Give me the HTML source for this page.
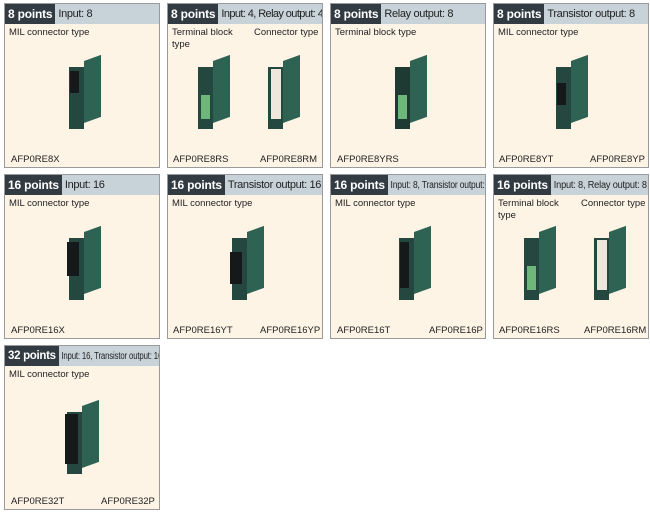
<!DOCTYPE html><html><head><style>
body{margin:0;width:650px;height:514px;background:#fff;font-family:"Liberation Sans",sans-serif;position:relative;overflow:hidden}
.c{position:absolute;width:156px;height:165px;border:1px solid #9a9a9a;background:#fdf4e6;box-sizing:border-box}
.h{height:20px;background:#c8d2d9;display:flex;align-items:center;white-space:nowrap;overflow:hidden}
.h b{background:#323a42;color:#fff;font-size:12px;height:20px;line-height:20px;padding:0 3px 0 3px;letter-spacing:-0.2px}
.h span{font-size:11px;color:#222;padding-left:3px;letter-spacing:-0.35px}
.h span.s{font-size:10px;letter-spacing:-0.2px;display:inline-block;transform:scaleX(0.92);transform-origin:0 50%}
.t{position:absolute;font-size:9.5px;color:#222;top:23px;line-height:12px}
.m{position:absolute;font-size:9.5px;color:#222;top:150px}
.mod{position:absolute;width:32px;height:68px}
.mod .f{position:absolute;left:0;top:6px;width:15px;height:62px;background:#24483f}
.mod .s{position:absolute;left:15px;top:0;width:17px;height:62px;background:#2e6354;transform:skewY(-20deg);transform-origin:0 100%}
.mod .k{position:absolute;left:1px;width:9px;background:#15191a}
.mod .g{position:absolute;left:3px;top:34px;width:9px;height:24px;background:#6fb67a}
.mod .w{position:absolute;left:3px;top:8px;width:10px;height:50px;background:#eee8dc}
</style></head><body>

<div class="c" style="left:4px;top:3px"><div class="h"><b>8 points</b><span>Input: 8</span></div>
<div class="t" style="left:4px">MIL connector type</div>
<div class="mod" style="left:64px;top:57px"><div class="s"></div><div class="f"></div><div class="k" style="top:10px;height:22px"></div></div>
<div class="m" style="left:6px">AFP0RE8X</div></div>

<div class="c" style="left:167px;top:3px"><div class="h"><b>8 points</b><span style="letter-spacing:-0.6px">Input: 4, Relay output: 4</span></div>
<div class="t" style="left:4px">Terminal block<br>type</div><div class="t" style="left:86px">Connector type</div>
<div class="mod" style="left:30px;top:57px"><div class="s"></div><div class="f"></div><div class="g"></div></div>
<div class="mod" style="left:100px;top:57px"><div class="s"></div><div class="f"></div><div class="w"></div></div>
<div class="m" style="left:5px">AFP0RE8RS</div><div class="m" style="left:92px">AFP0RE8RM</div></div>

<div class="c" style="left:330px;top:3px"><div class="h"><b>8 points</b><span>Relay output: 8</span></div>
<div class="t" style="left:4px">Terminal block type</div>
<div class="mod" style="left:64px;top:57px"><div class="s"></div><div class="f" style="background:#1f3a33"></div><div class="g"></div></div>
<div class="m" style="left:6px">AFP0RE8YRS</div></div>

<div class="c" style="left:493px;top:3px"><div class="h"><b>8 points</b><span>Transistor output: 8</span></div>
<div class="t" style="left:4px">MIL connector type</div>
<div class="mod" style="left:62px;top:57px"><div class="s"></div><div class="f"></div><div class="k" style="top:22px;height:22px"></div></div>
<div class="m" style="left:5px">AFP0RE8YT</div><div class="m" style="left:96px">AFP0RE8YP</div></div>

<div class="c" style="left:4px;top:174px"><div class="h"><b>16 points</b><span>Input: 16</span></div>
<div class="t" style="left:4px">MIL connector type</div>
<div class="mod" style="left:64px;top:57px"><div class="s"></div><div class="f"></div><div class="k" style="top:10px;height:34px;width:12px;left:-2px"></div></div>
<div class="m" style="left:6px">AFP0RE16X</div></div>

<div class="c" style="left:167px;top:174px"><div class="h"><b>16 points</b><span>Transistor output: 16</span></div>
<div class="t" style="left:4px">MIL connector type</div>
<div class="mod" style="left:64px;top:57px"><div class="s"></div><div class="f"></div><div class="k" style="top:20px;height:32px;width:12px;left:-2px"></div></div>
<div class="m" style="left:5px">AFP0RE16YT</div><div class="m" style="left:92px">AFP0RE16YP</div></div>

<div class="c" style="left:330px;top:174px"><div class="h"><b>16 points</b><span class="s" style="transform:scaleX(0.85)">Input: 8, Transistor output: 8</span></div>
<div class="t" style="left:4px">MIL connector type</div>
<div class="mod" style="left:68px;top:57px"><div class="s"></div><div class="f"></div><div class="k" style="top:10px;height:46px"></div></div>
<div class="m" style="left:6px">AFP0RE16T</div><div class="m" style="left:98px">AFP0RE16P</div></div>

<div class="c" style="left:493px;top:174px"><div class="h"><b>16 points</b><span class="s">Input: 8, Relay output: 8</span></div>
<div class="t" style="left:4px">Terminal block<br>type</div><div class="t" style="left:87px">Connector type</div>
<div class="mod" style="left:30px;top:57px"><div class="s"></div><div class="f"></div><div class="g"></div></div>
<div class="mod" style="left:100px;top:57px"><div class="s"></div><div class="f"></div><div class="w"></div></div>
<div class="m" style="left:5px">AFP0RE16RS</div><div class="m" style="left:90px">AFP0RE16RM</div></div>

<div class="c" style="left:4px;top:345px"><div class="h"><b style="font-size:11.5px;letter-spacing:-0.3px">32 points</b><span class="s" style="transform:scaleX(0.78)">Input: 16, Transistor output: 16</span></div>
<div class="t" style="left:4px">MIL connector type</div>
<div class="mod" style="left:62px;top:60px"><div class="s"></div><div class="f"></div><div class="k" style="top:8px;height:50px;width:13px;left:-2px"></div></div>
<div class="m" style="left:6px">AFP0RE32T</div><div class="m" style="left:96px">AFP0RE32P</div></div>

</body></html>
